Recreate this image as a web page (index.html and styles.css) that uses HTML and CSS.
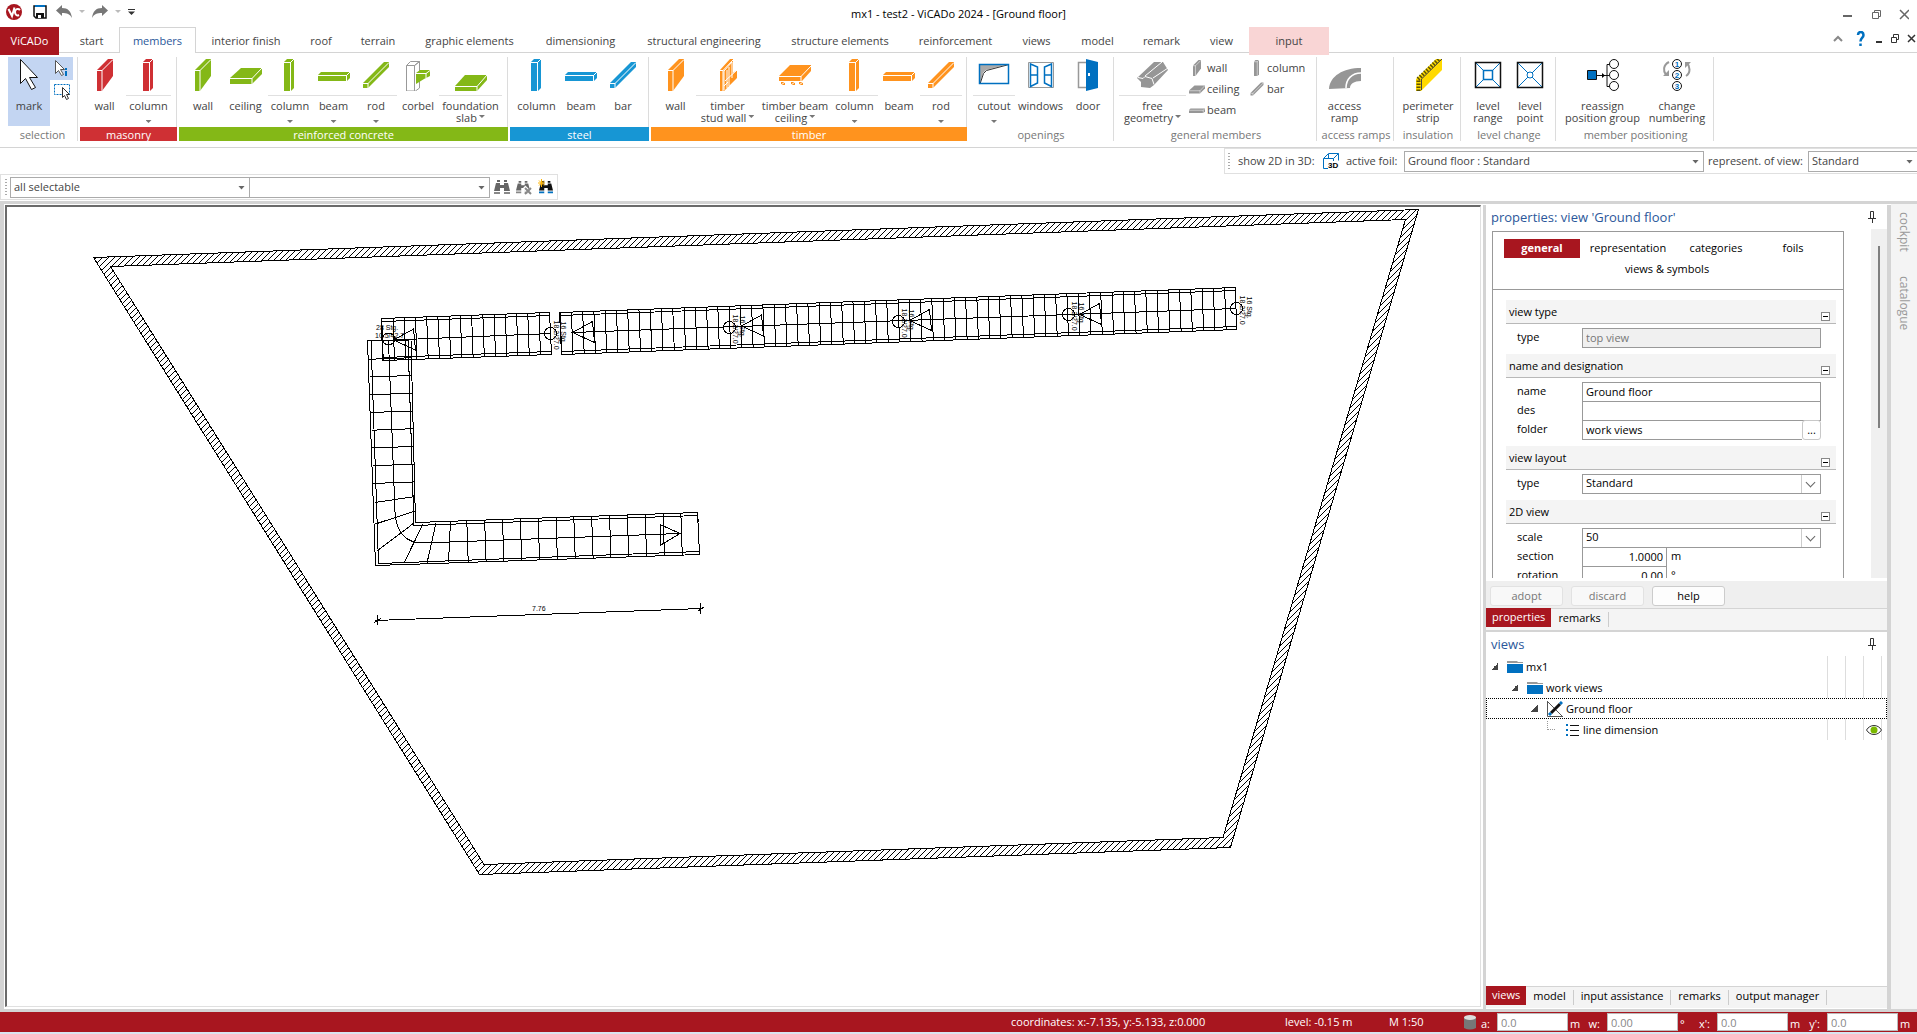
FILE: index.html
```html
<!DOCTYPE html>
<html lang="en">
<head>
<meta charset="utf-8">
<title>mx1 - test2 - ViCADo 2024 - [Ground floor]</title>
<link rel="stylesheet" href="styles.css">
</head>
<body>
<svg class="defs" aria-hidden="true">
  <symbol id="wall" viewBox="0 0 32 32"><path fill="currentColor" d="M8 11 19 0h5v17L13 32H8z"/><path class="edge" d="M8 11.500h5L24 .5M13 11v21"/></symbol>
  <symbol id="ceiling" viewBox="0 0 32 32"><path fill="currentColor" d="M0 19 11 9h21v6L22 25H0z"/><path class="edge" d="M0 19.500h22L32 9M22 19v6"/></symbol>
  <symbol id="column" viewBox="0 0 32 32"><path fill="currentColor" d="M10 3 13 0h7v29l-3 3h-7z"/><path class="edge" d="M10 3.500h6.500L20 0M16.500 3v29"/></symbol>
  <symbol id="beam" viewBox="0 0 32 32"><path fill="currentColor" d="M0 16l3-3h29v6l-3 3H0z"/><path class="edge" d="M0 16.500h28.500L32 13M28.500 16v6"/></symbol>
  <symbol id="rod" viewBox="0 0 32 32"><path fill="currentColor" d="M3 24 24 3h5v5L8 29H3z"/><path class="edge" d="M3 24.500h5L29 3.500M8 24v5"/></symbol>
  <symbol id="foundation" viewBox="0 0 32 32"><path fill="currentColor" d="M0 27 10 16h22v5L22 32H0z"/><path class="edge" d="M0 27.500h22L32 16M22 27v5"/></symbol>
  <symbol id="corbel" viewBox="0 0 32 32"><path fill="#fff" stroke="#999" d="M4.500 32V6.500l4-4h9l-5 4v25.500zM12.500 32h1l4-3V2.500l-5 4zM4.500 6.500h8"/><path fill="currentColor" d="M14 14l4-3h10v6l-6 3-8 5z"/><path class="edge" d="M14 14.500h10l4-3M24 14v5"/></symbol>
  <symbol id="studwall" viewBox="0 0 32 32"><path fill="currentColor" d="M8 11 18 0h3v14l4-3v8L12 32H8z"/><path class="edge" d="M8 11.500h3L21 1M11 11v21M12 31V12l8-9v16M15 29V11M17 27V8M13 22 25 11M12 27l4-4"/></symbol>
  <symbol id="beamceiling" viewBox="0 0 32 32"><path fill="currentColor" d="M0 17 11 6h21v6l-9 10H0zM2 23h4v3H2zm10 0h4v3h-4zM20 23h4v3h-4z"/><path class="edge" d="M0 17.500h22L32 7M22 17v5M2 26l4-3M12 26l4-3M20 26l4-3"/></symbol>
  <symbol id="cutout" viewBox="0 0 32 32"><path fill="#fff" d="M1.500 5.500h29v19h-29z"/><path fill="#aaa" d="M1 5h30L8 11 5 14 2 25z"/><path fill="none" stroke="#333" d="M31 5.500 8.500 11.500l-3 3L2 25"/><path fill="none" stroke="#0070c0" stroke-width="1.500" d="M1.500 5.500h29v19h-29z"/></symbol>
  <symbol id="windows" viewBox="0 0 32 32"><path fill="#fff" stroke="#999" d="M3.500 3.500h25v25h-25z"/><path fill="none" stroke="#0070c0" stroke-width="1.500" d="M5.500 5l7 3v16l-7 3.500zM26.500 5l-7 3v16l7 3.500zM5 16h7.500M19.500 16H27"/></symbol>
  <symbol id="door" viewBox="0 0 32 32"><path fill="none" stroke="#999" stroke-width="1.500" d="M14 3.500H6.500v25H14"/><path fill="#0070c0" d="M14 0l12 3v26l-12 3z"/><path fill="#fff" d="M16 14h2v3h-2z"/></symbol>
  <symbol id="freegeo" viewBox="0 0 32 32"><path fill="#969696" d="M0 19 17 3h9l5 8-14 15-4 3-9-1v-5z"/><path class="edge" d="M1 18.500l5 1 2-2 7 2 2 6M8 17 25 3M16 19 31 9"/></symbol>
  <symbol id="ramp" viewBox="0 0 32 32"><path fill="#969696" d="M0 30C1 17 14 9 32 9v13c-7 0-11 3-11 7z"/><path fill="none" stroke="#fff" stroke-width="1.500" d="M17 29c0-9 6-15 15-15"/></symbol>
  <symbol id="strip" viewBox="0 0 32 32"><path fill="#ffd900" d="M4 20 24 0h6v11L9 32H4z"/><path fill="none" stroke="#5c5300" stroke-width="4" stroke-dasharray="1.500 1.500" d="M6 20 27 0M6.500 32V20"/><path fill="none" stroke="#444" d="M9.500 31V20L30 0"/></symbol>
  <symbol id="range" viewBox="0 0 32 32"><path fill="none" stroke="#0070c0" d="M3 3l26 26M29 3 3 29"/><path fill="#fff" stroke="#0070c0" stroke-width="1.500" d="M11.500 11.500h9v9h-9z"/><path fill="none" stroke="#111" stroke-width="1.500" d="M3.500 3.500h25v25h-25z"/></symbol>
  <symbol id="point" viewBox="0 0 32 32"><path fill="none" stroke="#0070c0" d="M3 3l26 26M29 3 3 29"/><circle cx="16" cy="16" r="3" fill="#fff" stroke="#0070c0"/><path fill="none" stroke="#111" stroke-width="1.500" d="M3.500 3.500h25v25h-25z"/></symbol>
  <symbol id="reassign" viewBox="0 0 32 32"><path fill="#0070c0" stroke="#111" d="M.5 11.500h9v9h-9z"/><path fill="none" stroke="#111" d="M10 16.500h12M24 5.500h-4v22h4"/><path d="M15 14l3 2.500-3 2.500z"/><g fill="#fff" stroke="#111"><circle cx="27" cy="5" r="4.500"/><circle cx="27" cy="16" r="4.500"/><circle cx="27" cy="27" r="4.500"/></g></symbol>
  <symbol id="bino" viewBox="0 0 16 16"><path fill="currentColor" d="M3 1h3v2H3zM10 1h3v2h-3zM2 4h4v2h4V4h4l2 8h-6V9H6v3H0z"/><path class="foot" d="M0 13h6v2H0zM10 13h6v2h-6z"/></symbol>
  <symbol id="pin" viewBox="0 0 8 12"><path fill="none" stroke="#333" d="M2.500 7V.5h3V7M0 7.500h8M4.500 8v4"/><path stroke="#333" d="M5.500 1v6"/></symbol>
  <symbol id="folder" viewBox="0 0 16 12"><path fill="#999" d="M0 0h10l1 1h5v1H0z"/><path fill="#0070c0" d="M0 3h16v9H0z"/></symbol>
</svg>

<header class="titlebar">
  <div class="quick">
    <svg width="16" height="16" viewBox="0 0 16 16"><circle cx="8" cy="8" r="8" fill="#a8161f"/><path fill="none" stroke="#fff" stroke-width="2" d="M2.500 5 6 12 8.500 3.500M14 6c-2-2-5-1-5 2s2 4 4 3"/></svg>
    <svg class="save" width="14" height="14" viewBox="0 0 14 14"><path fill="#fff" stroke="#111" stroke-width="1.500" d="M1 1h12v12H3l-2-2z"/><path fill="#0070c0" d="M2 0h10v2H2z"/><path fill="#111" d="M3 8h8v5H3z"/><path fill="#fff" d="M5 10h3v3H5z"/></svg>
    <svg width="16" height="13" viewBox="0 0 16 13"><path fill="#777" d="M6 0v3c6 0 9 3 10 10-2-4-5-5-10-5v3L0 5.500z"/></svg>
    <i class="caret pale"></i>
    <svg width="16" height="13" viewBox="0 0 16 13"><path fill="#777" d="M10 0v3C4 3 1 6 0 13c2-4 5-5 10-5v3l6-5.500z"/></svg>
    <i class="caret pale"></i>
    <svg width="7" height="6" viewBox="0 0 7 6"><path d="M0 0h7v1H0zM0 2.500h7L3.500 6z" fill="#333"/></svg>
  </div>
  <h1>mx1 - test2 - ViCADo 2024 - [Ground floor]</h1>
  <div class="window">
    <svg width="66" height="14" viewBox="0 0 66 14"><path fill="none" stroke="#666" stroke-width="2" d="M0 9h9"/><path fill="none" stroke="#666" d="M29.500 5.500h6v6h-6zM31.500 5V3.500h6v6H36"/><path fill="none" stroke="#666" stroke-width="1.500" d="M57 3l9 9M66 3l-9 9"/></svg>
  </div>
</header>

<nav class="tabs">
  <a class="app" href="#">ViCADo</a><span></span><a href="#">start</a><a class="active" href="#">members</a><a href="#">interior finish</a><a href="#">roof</a><a href="#">terrain</a><a href="#">graphic elements</a><a href="#">dimensioning</a><a href="#">structural engineering</a><a href="#">structure elements</a><a href="#">reinforcement</a><a href="#">views</a><a href="#">model</a><a href="#">remark</a><a href="#">view</a><a class="input" href="#">input</a>
  <div class="window">
    <svg width="84" height="16" viewBox="0 0 84 16"><path fill="none" stroke="#888" stroke-width="2" d="M1 10l4-4 4 4"/><path fill="none" stroke="#0070c0" stroke-width="2.500" d="M25 4c0-4 5.500-4 5.500 0 0 3-3 3-3 6.500M27.500 12.500V15"/><path fill="none" stroke="#333" stroke-width="2" d="M43 11h6"/><path fill="none" stroke="#333" d="M58.500 6.500h5v5h-5zM60.500 6V3.500h5v5H64"/><path fill="none" stroke="#333" stroke-width="1.500" d="M75 4l7 7M82 4l-7 7"/></svg>
  </div>
</nav>

<section class="ribbon">
  <div class="group selection">
    <div class="tools">
      <button class="tool on"><svg class="pic" viewBox="0 0 32 37"><path fill="#fff" stroke="#111" d="M7.500.5v24l5-5 6 11 4-2-6-10h8z"/></svg><span>mark</span></button>
      <div class="minis">
        <button class="on" aria-label="pick info"><svg width="16" height="18" viewBox="0 0 16 18"><path fill="#fff" stroke="#555" d="M1.500.5v13l3-3 3 5 2-1-3-5h4z"/><path fill="#0070c0" d="M11 8h2v2h-2zm0 3h2v5h-2z"/></svg></button>
        <button aria-label="pick area"><svg width="16" height="16" viewBox="0 0 16 16"><path fill="none" stroke="#0070c0" stroke-dasharray="2 1" d="M.5.5h15v10H.5z"/><path fill="#fff" stroke="#333" d="M8.500 3.500v10l2-2 2 4 2-1-2-4h3z"/></svg></button>
      </div>
    </div>
    <div class="caption">selection</div>
  </div>
  <div class="group masonry">
    <div class="tools">
      <button class="tool"><svg class="pic"><use href="#wall" width="32" height="32"/></svg><span>wall</span></button>
      <button class="tool split"><svg class="pic"><use href="#column" width="32" height="32"/></svg><span>column</span><i class="caret"></i></button>
    </div>
    <div class="caption">masonry</div>
  </div>
  <div class="group concrete">
    <div class="tools">
      <button class="tool"><svg class="pic"><use href="#wall" width="32" height="32"/></svg><span>wall</span></button>
      <button class="tool"><svg class="pic"><use href="#ceiling" width="32" height="32"/></svg><span>ceiling</span></button>
      <button class="tool split"><svg class="pic"><use href="#column" width="32" height="32"/></svg><span>column</span><i class="caret"></i></button>
      <button class="tool split"><svg class="pic"><use href="#beam" width="32" height="32"/></svg><span>beam</span><i class="caret"></i></button>
      <button class="tool split"><svg class="pic"><use href="#rod" width="32" height="32"/></svg><span>rod</span><i class="caret"></i></button>
      <button class="tool"><svg class="pic"><use href="#corbel" width="32" height="32"/></svg><span>corbel</span></button>
      <button class="tool split"><svg class="pic"><use href="#foundation" width="32" height="32"/></svg><span>foundation<br>slab<i class="caret beside"></i></span></button>
    </div>
    <div class="caption">reinforced concrete</div>
  </div>
  <div class="group steel">
    <div class="tools">
      <button class="tool"><svg class="pic"><use href="#column" width="32" height="32"/></svg><span>column</span></button>
      <button class="tool"><svg class="pic"><use href="#beam" width="32" height="32"/></svg><span>beam</span></button>
      <button class="tool"><svg class="pic"><use href="#rod" width="32" height="32"/></svg><span>bar</span></button>
    </div>
    <div class="caption">steel</div>
  </div>
  <div class="group timber">
    <div class="tools">
      <button class="tool"><svg class="pic"><use href="#wall" width="32" height="32"/></svg><span>wall</span></button>
      <button class="tool split"><svg class="pic"><use href="#studwall" width="32" height="32"/></svg><span>timber<br>stud wall<i class="caret beside"></i></span></button>
      <button class="tool split"><svg class="pic"><use href="#beamceiling" width="32" height="32"/></svg><span>timber beam<br>ceiling<i class="caret beside"></i></span></button>
      <button class="tool split"><svg class="pic"><use href="#column" width="32" height="32"/></svg><span>column</span><i class="caret"></i></button>
      <button class="tool"><svg class="pic"><use href="#beam" width="32" height="32"/></svg><span>beam</span></button>
      <button class="tool split"><svg class="pic"><use href="#rod" width="32" height="32"/></svg><span>rod</span><i class="caret"></i></button>
    </div>
    <div class="caption">timber</div>
  </div>
  <div class="group openings">
    <div class="tools">
      <button class="tool split"><svg class="pic"><use href="#cutout" width="32" height="32"/></svg><span>cutout</span><i class="caret"></i></button>
      <button class="tool"><svg class="pic"><use href="#windows" width="32" height="32"/></svg><span>windows</span></button>
      <button class="tool"><svg class="pic"><use href="#door" width="32" height="32"/></svg><span>door</span></button>
    </div>
    <div class="caption">openings</div>
  </div>
  <div class="group general">
    <div class="tools">
      <button class="tool split"><svg class="pic"><use href="#freegeo" width="32" height="32"/></svg><span>free<br>geometry<i class="caret beside"></i></span></button>
      <div class="small">
        <button><svg width="16" height="16"><use href="#wall"/></svg>wall</button>
        <button><svg width="16" height="16"><use href="#ceiling"/></svg>ceiling</button>
        <button><svg width="16" height="16"><use href="#beam"/></svg>beam</button>
      </div>
      <div class="small">
        <button><svg width="16" height="16"><use href="#column"/></svg>column</button>
        <button><svg width="16" height="16"><use href="#rod"/></svg>bar</button>
      </div>
    </div>
    <div class="caption">general members</div>
  </div>
  <div class="group ramps">
    <div class="tools">
      <button class="tool"><svg class="pic"><use href="#ramp" width="32" height="32"/></svg><span>access<br>ramp</span></button>
    </div>
    <div class="caption">access ramps</div>
  </div>
  <div class="group insulation">
    <div class="tools">
      <button class="tool"><svg class="pic"><use href="#strip" width="32" height="32"/></svg><span>perimeter<br>strip</span></button>
    </div>
    <div class="caption">insulation</div>
  </div>
  <div class="group level">
    <div class="tools">
      <button class="tool"><svg class="pic"><use href="#range" width="32" height="32"/></svg><span>level<br>range</span></button>
      <button class="tool"><svg class="pic"><use href="#point" width="32" height="32"/></svg><span>level<br>point</span></button>
    </div>
    <div class="caption">level change</div>
  </div>
  <div class="group positioning">
    <div class="tools">
      <button class="tool"><svg class="pic"><use href="#reassign" width="32" height="32"/></svg><span>reassign<br>position group</span></button>
      <button class="tool"><svg class="pic" viewBox="0 0 32 37"><g fill="#fff" stroke="#111"><circle cx="16" cy="5" r="4.500"/><circle cx="16" cy="16" r="4.500"/><circle cx="16" cy="27" r="4.500"/></g><g class="digits"><text x="16" y="8">1</text><text x="16" y="19">2</text><text x="16" y="30">3</text></g><path fill="none" stroke="#999" stroke-width="2" d="M8 3C2 6 2 12 5 16M25 17c5-3 4-10 1-13"/><path fill="#999" d="M2 17h6v-6zM24 3h6l-6 6z"/></svg><span>change<br>numbering</span></button>
    </div>
    <div class="caption">member positioning</div>
  </div>
</section>

<div class="toolbar viewbar">
  <i class="grip"></i>
  <span class="t2d">show 2D in 3D:</span>
  <svg width="16" height="16" viewBox="0 0 16 16"><path fill="none" stroke="#0070c0" d="M.5 15.500v-10l5-5h10v7M.5 5.500h10l5-5M10.500 5.500V8M.5 15.500H5M5.500 1v5"/><text x="5" y="15" font-size="8" font-weight="bold" font-family="Liberation Sans, sans-serif">3D</text></svg>
  <label for="foil">active foil:</label>
  <span class="combo foil"><select id="foil"><option>Ground floor : Standard</option></select></span>
  <label for="rep">represent. of view:</label>
  <span class="combo rep"><select id="rep"><option>Standard</option></select></span>
</div>

<div class="toolbar filterbar">
  <i class="grip"></i>
  <span class="combo filter"><select aria-label="selection filter"><option>all selectable</option></select></span>
  <span class="combo filter"><select aria-label="search"><option></option></select></span>
  <button class="find" aria-label="find"><svg width="14" height="16"><use href="#bino"/></svg></button>
  <button class="find" aria-label="clear find"><svg width="16" height="16"><use href="#bino" width="14" height="16"/><path stroke="#fff" stroke-width="4" d="M8 8l8 8"/><path stroke="#888" stroke-width="2" d="M9 9l6 6M15 9l-6 6"/></svg></button>
  <button class="find new" aria-label="new find"><svg width="16" height="16"><use href="#bino" x="1" width="14" height="16"/><path stroke="#ffb400" d="M3.500 0v8M0 4h7M1 1.500l5 5M6 1.500l-5 5"/></svg></button>
</div>

<main class="workspace">
  <section class="canvas">
    <svg class="plan" viewBox="7 207 1473 797" preserveAspectRatio="xMinYMin meet">
      <defs>
        <pattern id="hatch" width="6" height="6" patternUnits="userSpaceOnUse"><path d="M-1 7 7-1M-1 1 1-1M5 7 7 5" stroke="#000" stroke-width="1"/></pattern>
        <path id="arrow" d="M0 0 20-11 22 10z"/>
        <g id="mark"><circle r="6"/><g transform="rotate(90)"><text x="-13" y="-3">18.2/27.0</text><text x="-12" y="-10">16 Stg.</text></g></g>
      </defs>
      <path fill="url(#hatch)" fill-rule="evenodd" class="line" d="M93.500 257.500 1418.500 209.500 1230.500 847.500 479.500 874.500zM110.500 266.500 484 864.500 1223 837.500 1405.500 219.500z"/>
      <g class="line">
        <path d="M381.500 318.500 549.500 312.500 551.500 354.500 382.500 360.500zM382 321.500l168-6M383 357.500l168.500-6"/>
        <path d="M559.500 312.500 1235.500 287.500 1236.500 329.500 561.500 354.500zM560 315.500l676-25M561 351.500l676-25"/>
        <path d="M393.500 340 551 333.500M572.500 332.500 1236 308.500"/>
        <path d="M408 340.500H367.500L375.500 565.500 699.500 554.500 697.500 512.500 415.500 522.500 411 340M371 340l7.500 223.500 321-12M408 340l6 185.500 284-10"/>
        <path d="M388.500 341 395 512q2 31 28 31l257-9.500"/>
        <path d="M375 502.500 415 496.500M375.500 524 415 511M377 551 414 523M404 563 423 524M427 563 436 523M448.500 562.500 450.500 521"/>
        <path d="M660 524.500v21l20-12z"/>
        <path d="M375 620.500 702 608.500M377.500 615v10M374 622.500l7-4M700.500 603v11M698 611l6-4"/>
        <use href="#arrow" x="393.500" y="340"/><use href="#arrow" x="572.500" y="332.500"/><use href="#arrow" x="741.500" y="326"/><use href="#arrow" x="909.500" y="320.500"/><use href="#arrow" x="1079.500" y="314.500"/>
      </g>
      <g class="treads">
        <path stroke-dasharray="1 10.240" d="M382 339.400 550.700 333.400"/>
        <path stroke-dasharray="1 10.270" d="M560.400 333.400 1236.200 308.500"/>
        <path stroke-dasharray="1 16.850" d="M467 541.500 699 533.500"/>
        <path stroke-dasharray="1 16.750" d="M390 358 394.500 484"/>
      </g>
      <g class="notes">
        <use href="#mark" x="550.500" y="333.500"/><use href="#mark" x="729.500" y="327.500"/><use href="#mark" x="898.500" y="321.500"/><use href="#mark" x="1068.500" y="314.500"/><use href="#mark" x="1236.500" y="308.500"/>
        <circle cx="388.500" cy="339" r="6"/>
        <text x="376" y="330">28 Stg.</text><text x="375" y="338">10.5/42.7</text><text x="532" y="611">7.76</text>
      </g>
    </svg>
  </section>

  <aside class="side">
    <section class="properties">
      <h2>properties: view 'Ground floor'<svg width="8" height="12"><use href="#pin"/></svg></h2>
      <div class="scroller">
        <form class="sheet">
          <nav class="pages">
            <button type="button" class="on">general</button><button type="button">representation</button><button type="button">categories</button><button type="button">foils</button><button type="button" class="wide">views &amp; symbols</button>
          </nav>
          <fieldset>
            <h3>view type<button type="button" aria-label="collapse"></button></h3>
            <div class="row"><label for="vt">type</label><input id="vt" value="top view" disabled></div>
          </fieldset>
          <fieldset>
            <h3>name and designation<button type="button" aria-label="collapse"></button></h3>
            <div class="row"><label for="nm">name</label><input id="nm" value="Ground floor"></div>
            <div class="row"><label for="ds">des</label><input id="ds"></div>
            <div class="row"><label for="fo">folder</label><span class="browse"><input id="fo" value="work views"><button type="button">...</button></span></div>
          </fieldset>
          <fieldset>
            <h3>view layout<button type="button" aria-label="collapse"></button></h3>
            <div class="row"><label for="ly">type</label><span class="combo chevron"><select id="ly"><option>Standard</option></select></span></div>
          </fieldset>
          <fieldset>
            <h3>2D view<button type="button" aria-label="collapse"></button></h3>
            <div class="row"><label for="sc">scale</label><span class="combo chevron"><select id="sc"><option>50</option></select></span></div>
            <div class="row"><label for="se">section</label><input id="se" class="num" value="1.0000"><span>m</span></div>
            <div class="row"><label for="ro">rotation</label><input id="ro" class="num" value="0.00"><span>°</span></div>
          </fieldset>
        </form>
        <div class="track"><i></i></div>
      </div>
      <div class="actions"><button disabled>adopt</button><button disabled>discard</button><button>help</button></div>
      <nav class="dock"><a class="on" href="#">properties</a><a href="#">remarks</a></nav>
    </section>
    <section class="views">
      <h2>views<svg width="8" height="12"><use href="#pin"/></svg></h2>
      <ul class="tree">
        <li><i class="open"></i><svg width="16" height="12"><use href="#folder"/></svg>mx1</li>
        <li class="l2"><i class="open"></i><svg width="16" height="12"><use href="#folder"/></svg>work views</li>
        <li class="l3"><i class="open"></i><svg width="16" height="16" viewBox="0 0 16 16"><path fill="none" stroke="#555" d="M.5 0v15.500H16M1 1l14 14" /><path stroke="#111" stroke-width="3" d="M4 12 13 3"/><path stroke="#0070c0" stroke-width="3" d="M2 14l2-2M13 3l2-2"/></svg>Ground floor</li>
        <li class="l4"><i class="twig"></i><svg width="16" height="14" viewBox="0 0 16 14"><path fill="#0070c0" d="M2 1h2v2H2zm0 5h2v2H2zm0 5h2v2H2z"/><path stroke="#111" d="M6 2.500h9M6 7.500h9M6 12.500h9"/></svg>line dimension<svg class="eye" width="16" height="12" viewBox="0 0 16 12"><path fill="#fff" stroke="#333" d="M.5 6C4 0 12 0 15.500 6 12 12 4 12 .5 6z"/><circle cx="8" cy="6" r="3.500" fill="#7ab800"/></svg></li>
      </ul>
      <nav class="dock"><a class="on" href="#">views</a><a href="#">model</a><a href="#">input assistance</a><a href="#">remarks</a><a href="#">output manager</a></nav>
    </section>
  </aside>

  <nav class="strip"><a href="#">cockpit</a><a href="#">catalogue</a></nav>
</main>

<footer class="status">
  <span class="coords">coordinates: x:-7.135, y:-5.133, z:0.000</span>
  <span class="lvl">level: -0.15 m</span>
  <span class="scale">M 1:50</span>
  <svg width="12" height="15" viewBox="0 0 12 15"><path fill="#777" d="M0 2h12v11q-6 3-12 0z"/><ellipse cx="6" cy="2.500" rx="6" ry="2.500" fill="#ddd"/></svg>
  <label for="fa">a:</label><input id="fa" placeholder="0.0"><b>m</b>
  <label for="fw">w:</label><input id="fw" placeholder="0.00"><b>°</b>
  <label for="fx">x':</label><input id="fx" placeholder="0.0"><b>m</b>
  <label for="fy">y':</label><input id="fy" placeholder="0.0"><b>m</b>
</footer>
</body>
</html>
```
FILE: styles.css
```css
* { box-sizing: border-box; }
body {
  margin: 0;
  height: 100vh;
  display: flex;
  flex-direction: column;
  overflow: hidden;
  background: #fff;
  color: #444;
  font: 11px/16px "Open Sans", "Noto Sans", sans-serif;
}
button, input, select { font: inherit; color: inherit; margin: 0; padding: 0; border: 0; background: none; border-radius: 0; }
a { color: inherit; text-decoration: none; }
h1, h2, h3, ul, fieldset { margin: 0; padding: 0; border: 0; font-weight: normal; list-style: none; }
svg { display: block; flex: none; }
.defs { position: absolute; width: 0; height: 0; }
.edge { fill: none; stroke: #fff; stroke-width: 1; }
.digits { font: bold 8px "Liberation Sans", sans-serif; fill: #0070c0; text-anchor: middle; }
.caret { display: block; width: 6px; height: 3px; background: #777; clip-path: polygon(0 0, 100% 0, 50% 100%); }
.caret.pale { background: #bbb; }

/* title bar */
.titlebar { flex: none; height: 27px; display: grid; grid-template-columns: 1fr auto 1fr; align-items: center; }
.titlebar h1 { font-size: 11px; color: #000; }
.quick { display: flex; align-items: center; gap: 7px; padding: 0 0 4px 6px; }
.quick .save { margin: 0 2px 0 4px; }
.titlebar .window { justify-self: end; padding-right: 8px; }

/* ribbon tabs */
.tabs {
  flex: none;
  height: 26px;
  display: grid;
  grid-template-columns: 59px 5px 55px 77px 100px 50px 64px 119px 103px 144px 128px 103px 59px 63px 65px 55px 80px 1fr;
  border-bottom: 1px solid #d4d4d4;
  text-align: center;
  line-height: 28px;
  white-space: nowrap;
}
.tabs .app { background: #a8161f; color: #fff; line-height: 27px; }
.tabs .active { height: 26px; border: 1px solid #d4d4d4; border-bottom: 0; background: #fff; color: #2b579a; line-height: 26px; }
.tabs .input { background: #f9d5d5; }
.tabs .window { justify-self: end; padding-top: 4px; }

/* ribbon */
.ribbon { flex: none; height: 95px; display: flex; gap: 2px; border-bottom: 1px solid #d4d4d4; }
.group { flex: none; margin: 4px 0 6px; display: flex; flex-direction: column; justify-content: space-between; border-right: 1px solid #dcdcdc; }
.tools { display: grid; padding-left: 4px; }
.tool { height: 69px; display: flex; flex-direction: column; align-items: center; padding-top: 2px; line-height: 12px; white-space: nowrap; }
.tool .pic { width: 32px; height: 37px; }
.tool > span { padding-top: 4px; }
.tool .caret { margin-top: 8px; }
.tool .caret.beside { display: inline-block; margin: 0 0 4px 2px; }
.split { background: linear-gradient(#e0e0e0, #e0e0e0) 0 38px / 100% 1px no-repeat; }
.on { background: #c3d5f2; }
.caption { height: 14px; line-height: 15px; text-align: center; color: #777; white-space: nowrap; }
.masonry .caption, .concrete .caption, .steel .caption, .timber .caption { margin-right: -1px; color: #fff; }
.selection { width: 78px; }
.selection .tools { grid-template-columns: 42px 23px; padding-left: 8px; }
.selection .caption { padding-left: 8px; }
.minis button { width: 23px; height: 23px; display: grid; place-items: center; }
.masonry { width: 97px; color: #cf3034; }
.masonry .tools { grid-template-columns: 43px 45px; padding-left: 3px; }
.masonry .caption { background: #cf3034; }
.concrete { width: 329px; color: #84b817; }
.concrete .tools { grid-template-columns: 40px 45px 44px 43px 42px 42px 63px; }
.concrete .caption { background: #84b817; }
.steel { width: 139px; color: #1796d4; }
.steel .tools { grid-template-columns: 45px 44px 40px; }
.steel .caption { background: #1796d4; }
.timber { width: 316px; color: #ff931e; }
.timber .tools { grid-template-columns: 41px 63px 72px 47px 42px 42px; }
.timber .caption { background: #ff931e; }
.tool > span, .small button { color: #444; }
.openings { width: 145px; }
.openings .tools { grid-template-columns: 42px 51px 44px; }
.general { width: 201px; }
.general .tools { grid-template-columns: 67px 60px 1fr; padding-left: 3px; }
.small button { height: 21px; display: flex; align-items: center; gap: 2px; padding-left: 3px; }
.small svg { color: #969696; }
.ramps { width: 75px; }
.ramps .tools { grid-template-columns: 51px; padding-left: 0; }
.insulation { width: 65px; }
.insulation .tools { grid-template-columns: 1fr; padding-left: 0; }
.level { width: 93px; }
.level .tools { grid-template-columns: 42px 42px; }
.positioning { width: 156px; }
.positioning .tools { grid-template-columns: 81px 68px; }

/* toolbars */
.toolbar { flex: none; height: 26px; display: flex; align-items: center; border: 1px solid #e0e0e0; white-space: nowrap; }
.grip { flex: none; width: 4px; height: 18px; margin: 0 2px; background: radial-gradient(#aaa 1px, transparent 1px) 0 0 / 4px 3px; }
.combo { position: relative; display: block; height: 21px; border: 1px solid #ababab; background: #fff; }
.combo select { appearance: none; display: block; width: 100%; height: 100%; padding-left: 3px; }
.combo::after { content: ""; position: absolute; right: 4px; top: 8px; width: 7px; height: 4px; background: #666; clip-path: polygon(0 0, 100% 0, 50% 100%); pointer-events: none; }
.viewbar { align-self: flex-end; width: 693px; border-right: 0; }
.viewbar .t2d { flex: 0 0 90px; padding-left: 5px; }
.viewbar label[for=foil] { flex: 0 0 65px; padding-left: 7px; }
.viewbar label[for=rep] { flex: 0 0 104px; padding-left: 4px; }
.viewbar .foil { width: 300px; }
.viewbar .rep { flex: 1; border-right: 0; }
.filterbar { width: 558px; padding-left: 1px; }
.filter { width: 240px; }
.filter + .filter { border-left: 0; }
.find { margin-left: 4px; margin-right: 2px; color: #666; }
.find .foot, .find { fill: #888; }
.find.new { color: #111; fill: #0070c0; }
.find svg { width: 16px; }

/* workspace */
.workspace { flex: 1; min-height: 0; margin-top: 1px; display: grid; grid-template-columns: minmax(0, 1fr) 408px 26px; border-top: 3px solid #d4d4d4; border-bottom: 3px solid #d4d4d4; border-left: 4px solid #d4d4d4; }
.canvas { margin: 1px 2px 2px 1px; border: 2px solid #6b6b6b; border-right: 1px solid #e0e0e0; border-bottom: 1px solid #e0e0e0; min-height: 0; overflow: hidden; }
.plan { width: 100%; height: 100%; shape-rendering: crispEdges; }
.line { fill-opacity: 1; stroke: #000; stroke-width: 1; }
g.line { fill: none; }
.treads { fill: none; stroke: #000; stroke-width: 42; }
.notes { fill: none; stroke: #000; }
.notes text, #mark text { stroke: none; fill: #000; font: 7px "Liberation Sans", sans-serif; }

/* side panel */
.side { display: flex; flex-direction: column; min-height: 0; margin-top: 1px; border-left: 3px solid #d4d4d4; border-right: 4px solid #d4d4d4; color: #000; }
.side h2 { height: 24px; display: flex; justify-content: space-between; align-items: center; padding: 0 11px 0 5px; font-size: 13px; color: #2b579a; }
.properties { flex: none; border-bottom: 2px solid #d4d4d4; }
.scroller { display: flex; justify-content: space-between; height: 349px; overflow: hidden; }
.sheet { width: 352px; height: 400px; margin: 2px 0 0 6px; border: 1px solid #999; }
.pages { height: 58px; display: grid; grid-template-columns: 76px 96px 80px 74px; grid-template-rows: 19px 19px; row-gap: 2px; padding: 7px 0 0 11px; border-bottom: 1px solid #999; }
.pages button { padding-bottom: 2px; }
.pages .on { background: #a8161f; color: #fff; font-weight: bold; }
.pages .wide { grid-column: 1 / -1; }
fieldset { padding: 0 7px 6px 13px; min-width: 0; }
fieldset:first-of-type { padding-top: 10px; }
.sheet h3 { height: 24px; display: flex; justify-content: space-between; padding: 4px 6px 0 3px; background: #f4f4f4; border-bottom: 1px solid #b8b8b8; margin-bottom: 4px; font-size: 11px; }
.sheet h3 button { width: 9px; height: 9px; margin-top: 8px; border: 1px solid #888; background: linear-gradient(#000, #000) center / 5px 1px no-repeat #fff; }
.row { height: 20px; display: grid; grid-template-columns: 65px 239px; margin-left: 11px; }
.row + .row { margin-top: -1px; }
.row > label { line-height: 17px; }
.row input { min-width: 0; height: 20px; padding: 0 3px 2px; border: 1px solid #999; background: #fff; }
.row input:disabled { background: #f0f0f0; color: #777; }
.row .num { text-align: right; }
.row:has(.num) { grid-template-columns: 65px 85px 1fr; }
.row:has(.num) span { padding-left: 4px; line-height: 18px; }
.browse { display: grid; grid-template-columns: 1fr 19px; }
.browse input { border-right: 0; }
.browse button { border: 1px solid #c8c8c8; border-radius: 3px; background: #fff; line-height: 18px; }
.row .combo { height: 20px; border-color: #999; background: linear-gradient(#ccc, #ccc) right 18px top / 1px 100% no-repeat #fff; }
.row .combo select { padding-bottom: 2px; }
.combo.chevron::after { width: 6px; height: 6px; right: 6px; top: 4px; background: none; clip-path: none; border: solid #666; border-width: 0 1px 1px 0; transform: rotate(45deg); }
.track { width: 16px; background: #f0f0f0; padding: 17px 7px; }
.track i { display: block; width: 2px; height: 182px; background: #808080; }
.actions { height: 27px; margin-top: 3px; padding: 5px 4px 0; display: flex; gap: 8px; background: #efefef; }
.actions button { width: 73px; height: 20px; border: 1px solid #ccc; border-radius: 3px; background: #fdfdfd; }
.actions button:disabled { color: #777; border-color: #e2e2e2; background: #f8f8f8; }
.dock { flex: none; height: 22px; display: flex; background: #f4f4f4; border-top: 1px solid #d4d4d4; }
.dock a { height: 15px; margin-top: 3px; padding: 0 7px; border-right: 1px solid #ccc; line-height: 12px; }
.dock a.on { height: 19px; margin-top: -1px; padding: 3px 6px 0; background: #a8161f; color: #fff; border: 0; }
.views { flex: 1; min-height: 0; display: flex; flex-direction: column; padding-bottom: 1px; }
.tree { flex: 1; }
.tree li { height: 21px; display: flex; align-items: center; padding: 0 5px; gap: 3px; background: repeating-linear-gradient(90deg, #ddd 0 1px, transparent 1px 18px) right top / 60px 100% no-repeat; }
.tree li i { width: 13px; flex: none; }
.tree .open { height: 7px; background: linear-gradient(135deg, transparent 50%, #444 50%) 0 0 / 7px 7px no-repeat; }
.tree .l2 { padding-left: 25px; }
.tree .l3 { padding-left: 44px; border: 1px dotted #000; background: none; }
.tree .l4 { padding-left: 61px; }
.tree .twig { width: 8px; height: 9px; margin: 0 6px 9px 0; border: 1px dotted #999; border-width: 0 0 1px 1px; }
.tree .eye { margin-left: auto; }
.strip { background: #f4f4f4; writing-mode: vertical-rl; display: flex; gap: 24px; padding: 8px 5px 0 0; font-size: 12px; color: #999; }

/* status bar */
.status { flex: none; height: 22px; display: flex; align-items: center; justify-content: flex-end; background: #a8161f; color: #fff; border-bottom: 2px solid #d9e4f0; white-space: nowrap; }
.coords { width: 274px; }
.lvl { width: 104px; }
.scale { width: 75px; }
.status label { width: 33px; padding: 4px 7px 0 0; text-align: right; }
.status input { width: 71px; height: 18px; padding: 0 3px; background: #fff; border: 1px solid #bbb; }
.status input::placeholder { color: #888; opacity: 1; }
.status label[for=fa] { width: 21px; }
.status b { width: 6px; padding: 3px 0 0 2px; font-weight: normal; }
.status b:last-child { width: 19px; }
```
